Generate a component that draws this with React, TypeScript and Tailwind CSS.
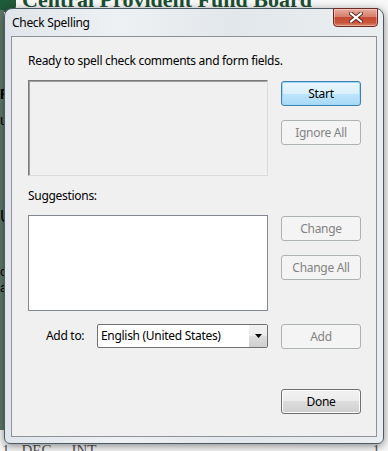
import React from "react"

const ui = { fontFamily: '"Noto Sans", "Open Sans", Arial, sans-serif' }

function WinButton({ label, kind = "normal" }: { label: string; kind?: "normal" | "default" | "disabled" }) {
    if (kind === "disabled") {
        return (
            <div className="w-[80px] h-[25px] rounded-[3px] border border-[#adb2b5] bg-[#f4f4f4] flex items-center justify-center text-[12px] text-[#838383]">
                {label}
            </div>
        )
    }
    if (kind === "default") {
        return (
            <div className="w-[80px] h-[25px] rounded-[3px] border border-[#3c7fb1] bg-[linear-gradient(#eaf6fd_0%,#d9f0fc_50%,#bee6fd_50%,#a7d9f5_100%)] shadow-[inset_0_0_0_1px_#9fd8f9] flex items-center justify-center text-[12px] text-black">
                {label}
            </div>
        )
    }
    return (
        <div className="w-[80px] h-[25px] rounded-[3px] border border-[#707070] bg-[linear-gradient(#f2f2f2_0%,#ebebeb_50%,#dddddd_50%,#cfcfcf_100%)] shadow-[inset_0_0_0_1px_#fcfcfc] flex items-center justify-center text-[12px] text-black">
            {label}
        </div>
    )
}

export default function App() {
    return (
        <div className="relative w-[388px] h-[451px] overflow-hidden bg-[#f7f7f7] tracking-[-0.3px]" style={ui}>
            {/* page behind the dialog */}
            <div className="absolute inset-0 tracking-normal">
                <div className="absolute left-0 top-[-8px] w-[16px] h-[20px] bg-[#1f5a3a] rounded-r-[6px]" />
                <div
                    className="absolute left-[22px] top-[-13px] text-[22px] leading-[25px] font-bold text-[#1c4f33] whitespace-nowrap"
                    style={{ fontFamily: '"Liberation Serif", serif' }}
                >
                    Central Provident Fund Board
                </div>
                <div className="absolute left-0 top-[10px] w-[4px] h-[420px] bg-[#5f7a6a]" />
                <div className="absolute left-0 top-[84px] text-[14px] font-bold text-black" style={{ fontFamily: '"Liberation Sans", sans-serif' }}>F</div>
                <div className="absolute left-0 top-[110px] text-[14px] text-black" style={{ fontFamily: '"Liberation Sans", sans-serif' }}>u</div>
                <div className="absolute left-0 top-[205px] text-[16px] text-black" style={{ fontFamily: '"Liberation Sans", sans-serif' }}>U</div>
                <div className="absolute left-0 top-[262px] text-[13px] text-black" style={{ fontFamily: '"Liberation Sans", sans-serif' }}>c</div>
                <div className="absolute left-0 top-[278px] text-[13px] text-black" style={{ fontFamily: '"Liberation Sans", sans-serif' }}>a</div>
                <div
                    className="absolute left-0 right-0 top-[442px] flex text-[15px] leading-[17px] text-[#555]"
                    style={{ fontFamily: '"Liberation Serif", serif' }}
                >
                    <span className="ml-[2px]">1</span>
                    <span className="ml-[12px]">DEC</span>
                    <span className="ml-[20px]">INT</span>
                    <span className="ml-auto mr-[8px]">1</span>
                </div>
            </div>

            {/* dialog window */}
            <div className="absolute left-[4px] top-[8px] w-[380px] h-[436px] rounded-t-[8px] rounded-b-[6px] border border-[#4e5a63] bg-[linear-gradient(90deg,#dfe5ea_0%,#eef1f4_30%,#e2e7eb_60%,#eaeef1_100%)] shadow-[0_2px_8px_rgba(0,0,0,0.45)] flex flex-col">
                <div className="h-[27px] flex items-start pl-[7px] relative">
                    <span className="mt-[6px] text-[12px] leading-[16px] text-black">Check Spelling</span>
                    <div className="absolute right-[5px] top-[-1px] w-[45px] h-[19px] rounded-b-[4px] border border-[#6e2a20] bg-[linear-gradient(#e8a99c_0%,#d7806e_45%,#c74a35_50%,#c8553c_80%,#d98a6c_100%)] shadow-[inset_0_0_0_1px_rgba(255,255,255,0.35)] flex items-center justify-center">
                        <svg width="14" height="11" viewBox="0 0 14 11">
                            <path d="M2 1.5 L12 9.5 M12 1.5 L2 9.5" stroke="#5a2a22" strokeWidth="4" strokeLinecap="square" />
                            <path d="M2 1.5 L12 9.5 M12 1.5 L2 9.5" stroke="#ffffff" strokeWidth="2" strokeLinecap="square" />
                        </svg>
                    </div>
                </div>

                {/* client area */}
                <div className="mx-[6px] mb-[6px] flex-1 border border-[#8e9296] bg-[#f0f0f0] pl-[16px] pt-[16px] flex flex-col">
                    <p className="text-[12px] leading-[16px] text-black">Ready to spell check comments and form fields.</p>

                    <div className="flex mt-[11px]">
                        <div className="w-[240px] h-[96px] border border-[#7a7a7a] border-r-[#dcdcdc] border-b-[#dcdcdc] shadow-[inset_1px_1px_0_#a0a0a0] bg-[#f0f0f0]" />
                        <div className="ml-[13px] mt-[1px] flex flex-col gap-[14px]">
                            <WinButton label="Start" kind="default" />
                            <WinButton label="Ignore All" kind="disabled" />
                        </div>
                    </div>

                    <p className="mt-[12px] text-[12px] leading-[16px] text-black">Suggestions:</p>

                    <div className="flex mt-[11px]">
                        <div className="w-[240px] h-[96px] border border-[#828790] bg-white" />
                        <div className="ml-[13px] mt-[1px] flex flex-col gap-[14px]">
                            <WinButton label="Change" kind="disabled" />
                            <WinButton label="Change All" kind="disabled" />
                        </div>
                    </div>

                    <div className="flex mt-[13px] items-start">
                        <div className="w-[240px] flex items-center h-[24px]">
                            <span className="ml-[18px] w-[51px] text-[12px] text-black">Add to:</span>
                            <div className="w-[171px] h-[24px] border border-[#707070] rounded-[2px] bg-white flex items-center">
                                <span className="flex-1 pl-[3px] text-[12px] text-black">English (United States)</span>
                                <div className="w-[18px] h-[22px] bg-[linear-gradient(#f2f2f2_0%,#ebebeb_50%,#dddddd_50%,#cfcfcf_100%)] flex items-center justify-center">
                                    <svg width="7" height="4" viewBox="0 0 7 4">
                                        <path d="M0 0 H7 L3.5 4 Z" fill="#000" />
                                    </svg>
                                </div>
                            </div>
                        </div>
                        <div className="ml-[13px]">
                            <WinButton label="Add" kind="disabled" />
                        </div>
                    </div>

                    <div className="flex mt-[40px]">
                        <div className="ml-[253px]">
                            <WinButton label="Done" />
                        </div>
                    </div>
                </div>
            </div>
        </div>
    )
}
